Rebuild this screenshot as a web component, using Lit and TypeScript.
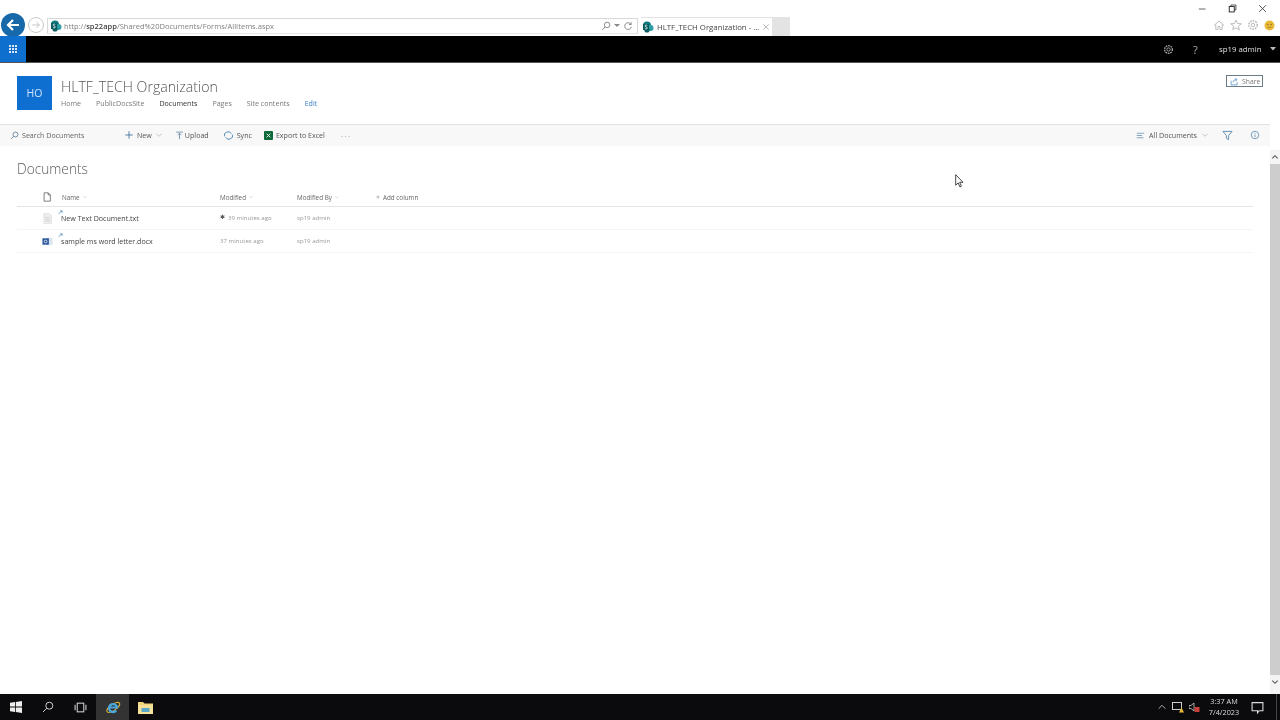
import { LitElement, html, css, svg } from "lit";
import { customElement } from "lit/decorators.js";

const spIcon = (s: number) => html`<svg width=${s} height=${s} viewBox="0 0 12 12"><circle cx="5" cy="4.500" r="4" fill="#0b7a7f"/><circle cx="8.500" cy="7" r="3" fill="#2aa0a4"/><circle cx="5" cy="9" r="2.600" fill="#0d5f63"/><rect x="1" y="3" width="6" height="6" fill="#04595c"/><path d="M5.300 4.400C4.600 3.900 3 4 3 5c0 1.200 2.400.8 2.400 2 0 1-1.700 1-2.500.5" fill="none" stroke="#fff" stroke-width=".8"/></svg>`;

const stroke = (inner: unknown, s = 12, color = "currentColor", w = 1, box = 12) => html`<svg width=${s} height=${s} viewBox="0 0 ${box} ${box}" fill="none" stroke=${color} stroke-width=${w}>${inner}</svg>`;

const search = svg`<circle cx="7.300" cy="4.700" r="3.300"/><path d="M5 7L1.500 10.700"/>`;
const chevron = svg`<path d="M2 4l4 4 4-4"/>`;
const gear = svg`<circle cx="6" cy="6" r="1.800"/><circle cx="6" cy="6" r="4.200" stroke-dasharray="1.800 .9" stroke-width="1.500"/>`;
const fileOutline = svg`<path d="M2.500 1h5l2.500 2.500V11h-7.500zM7.500 1v2.500H10"/>`;

@customElement("browser-chrome")
class BrowserChrome extends LitElement {
  static styles = css`
    :host { display: block; height: 36px; background: #fff; position: relative; }
    .bar { display: flex; align-items: flex-end; height: 36px; padding-left: 47px; }
    .addr { width: 587px; height: 14px; margin-bottom: 2px; border: 1px solid #d9d9d9; border-bottom-color: #e4e4e4; display: flex; align-items: center; font-size: 7.550px; color: #808080; padding-left: 2px; box-sizing: content-box; }
    .addr b { font-weight: 600; color: #444; }
    .addr .url { margin-left: 2px; }
    .tools { margin-left: auto; display: flex; align-items: center; gap: 3px; color: #777; padding-right: 4px; }
    .tab { margin-left: 3px; width: 131px; height: 19px; background: #fff; border-top: 1px solid #e2e2e2; box-sizing: border-box; display: flex; align-items: center; gap: 3px; padding-left: 1px; font-size: 7.800px; color: #444; white-space: nowrap; }
    .tab .x { margin-left: 0; color: #999; display: flex; }
    .newtab { width: 18px; height: 19px; background: #e3e3e3; }
    .right { position: absolute; right: 0; top: 0; width: 90px; height: 36px; }
    .win { display: flex; position: absolute; top: 4px; right: 12px; gap: 20px; align-items: center; color: #333; }
    .win span { display: flex; width: 10px; justify-content: center; }
    .ico { display: flex; position: absolute; top: 19px; right: 5px; gap: 5px; color: #bbb; align-items: center; }
    .back { position: absolute; left: 1px; top: 13px; width: 24px; height: 24px; border-radius: 50%; background: #1769aa; display: flex; align-items: center; justify-content: center; }
    .fwd { position: absolute; left: 28px; top: 17px; width: 16px; height: 16px; border-radius: 50%; border: 1px solid #c9c9c9; box-sizing: border-box; display: flex; align-items: center; justify-content: center; background: #fff; color: #bbb; }
  `;
  render() {
    return html`
      <div class="bar">
        <div class="addr">
          ${spIcon(12)}
          <span class="url">http://<b>sp22app</b>/Shared%20Documents/Forms/AllItems.aspx</span>
          <span class="tools">
            ${stroke(search, 10, "#777")}
            <svg width="6" height="4" viewBox="0 0 6 4"><path d="M0 0h6L3 3z" fill="#888"/></svg>
            ${stroke(svg`<path d="M9.500 4A4 4 0 1 0 10 7M9.800 1.500V4.200H7.200"/>`, 10, "#777")}
          </span>
        </div>
        <div class="tab">
          ${spIcon(12)}<span>HLTF_TECH Organization - ...</span>
          <span class="x">${stroke(svg`<path d="M2 2l8 8M10 2l-8 8"/>`, 8, "#999")}</span>
        </div>
        <div class="newtab"></div>
      </div>
      <div class="back"><svg width="14" height="14" viewBox="0 0 14 14" fill="none" stroke="#fff" stroke-width="2.200"><path d="M13 7H2M7 2L2 7l5 5"/></svg></div>
      <div class="fwd">${stroke(svg`<path d="M1.500 6H10M6.500 2.500L10 6l-3.500 3.500"/>`, 10, "#bbb")}</div>
      <div class="right">
        <div class="win">
          <span>${stroke(svg`<path d="M1 6h8" stroke-width="1.200"/>`, 10, "#666")}</span>
          <span>${stroke(svg`<rect x="1.500" y="3" width="6" height="6.500" stroke-width="1.200"/><path d="M3.500 3V1.200h6v6H7.500"/>`, 10, "#333")}</span>
          <span>${stroke(svg`<path d="M1.500 1.500l8 8M9.500 1.500l-8 8"/>`, 10, "#333")}</span>
        </div>
        <div class="ico">
          ${stroke(svg`<path d="M1 6.500L6 2l5 4.500M2.800 5.500V10.500H5V7.500h2v3h2.200V5.500"/>`, 12, "#bdbdbd")}
          ${stroke(svg`<path d="M6 1l1.500 3.500 3.800.300-2.900 2.500.900 3.700L6 8.700 2.700 10.500l.900-3.700L.7 4.800l3.800-.300z"/>`, 12, "#bdbdbd")}
          ${stroke(gear, 12, "#bdbdbd")}
          <svg width="11" height="11" viewBox="0 0 12 12"><circle cx="6" cy="6" r="5.500" fill="#e9b93a"/><circle cx="4.200" cy="5" r=".8" fill="#8a6a10"/><circle cx="7.800" cy="5" r=".8" fill="#8a6a10"/><path d="M3.800 8h4.400" stroke="#8a6a10" stroke-width=".7"/></svg>
        </div>
      </div>
    `;
  }
}

@customElement("suite-bar")
class SuiteBar extends LitElement {
  static styles = css`
    :host { display: flex; height: 26px; background: #000; border-bottom: 1px solid #555; box-sizing: content-box; margin-bottom: -1px; align-items: center; color: #ddd; position: relative; }
    .waffle { width: 26px; height: 26px; background: #0e6fcf; display: grid; grid-template-columns: repeat(3, 2px); grid-auto-rows: 2px; gap: 1px; align-content: center; justify-content: center; }
    .waffle i { background: #dfe9f5; }
    .gear { margin-left: auto; display: flex; }
    .help { margin-left: 19px; font-size: 11px; width: 8px; color: #aaa; }
    .user { margin-left: 18px; font-size: 7.800px; color: #e0e0e0; width: 42px; white-space: nowrap; }
    .caret { margin: 0 4px 0 9px; display: flex; }
  `;
  render() {
    return html`
      <div class="waffle">${[...Array(9)].map(() => html`<i></i>`)}</div>
      <span class="gear">${stroke(gear, 11, "#aaa")}</span>
      <span class="help">?</span>
      <span class="user">sp19 admin</span>
      <span class="caret"><svg width="6" height="4" viewBox="0 0 6 4"><path d="M0 0h6L3 3.500z" fill="#bbb"/></svg></span>
    `;
  }
}

@customElement("site-header")
class SiteHeader extends LitElement {
  static styles = css`
    :host { display: flex; height: 62px; padding: 14px 17px 0; box-sizing: border-box; position: relative; }
    .logo { width: 35px; height: 34px; background: #0f6fd1; color: #cfe3f8; font-size: 10.500px; display: flex; align-items: center; justify-content: center; }
    .txt { margin-left: 9px; }
    h1 { margin: 1px 0 0; font-weight: 300; font-size: 14.150px; line-height: 20px; color: #555; }
    nav { display: flex; gap: 15px; font-size: 7.100px; color: #7a7a7a; margin-top: 1px; line-height: 11px; }
    nav .cur { color: #333; }
    nav .edit { color: #3a7fc4; }
    .share { position: absolute; top: 13px; right: 17px; width: 37px; height: 12px; border: 1px solid #6d7d88; box-sizing: border-box; display: flex; align-items: center; gap: 3px; padding-left: 3px; font-size: 6.800px; color: #777; }
  `;
  render() {
    return html`
      <div class="logo">HO</div>
      <div class="txt">
        <h1>HLTF_TECH Organization</h1>
        <nav>
          <span>Home</span><span>PublicDocsSite</span><span class="cur">Documents</span><span>Pages</span><span>Site contents</span><span class="edit">Edit</span>
        </nav>
      </div>
      <div class="share">${stroke(svg`<path d="M1.500 5v5.500h8V7M4 7c0-2.500 2-3.500 4.500-3.500M7 1.500l2.500 2L7 5.500"/>`, 9, "#4a8ac0")}<span>Share</span></div>
    `;
  }
}

@customElement("command-bar")
class CommandBar extends LitElement {
  static styles = css`
    :host { display: flex; height: 22px; margin-right: 10px; padding-bottom: 1px; background: #f8f8f8; border-top: 1px solid #e3e3e3; box-sizing: border-box; align-items: center; font-size: 7.100px; color: #555; position: relative; }
    .search { display: flex; align-items: center; gap: 3px; width: 124px; padding-left: 10px; box-sizing: border-box; color: #666; }
    .cmd { display: flex; align-items: center; gap: 3px; margin-right: 12px; }
    .cmd.tight { gap: 1px; margin-right: 14px; }
    .more { letter-spacing: 1.500px; color: #888; font-size: 8px; margin-left: 4px; }
    .right { margin-left: auto; display: flex; align-items: center; padding-right: 10px; }
    .view { display: flex; align-items: center; gap: 4px; margin-right: 13px; }
    .gap { margin-right: 17px; display: flex; }
  `;
  render() {
    return html`
      <div class="search">${stroke(search, 9, "#4a6f8c")}<span>Search Documents</span></div>
      <div class="cmd">${stroke(svg`<path d="M6 1.500v9M1.500 6h9"/>`, 10, "#3f6f9c")}<span>New</span>${stroke(chevron, 8, "#aaa")}</div>
      <div class="cmd tight">${stroke(svg`<path d="M1.500 1.500h9M6 3v8M3.500 5.500L6 3l2.500 2.500"/>`, 9, "#5b7f9e")}<span>Upload</span></div>
      <div class="cmd">${stroke(svg`<path d="M2 7a3 3 0 0 1 2-4.500 3.500 3.500 0 0 1 5 1.500M10 5a3 3 0 0 1-2 4.500 3.500 3.500 0 0 1-5-1.500" stroke="#3f7fb0"/>`, 11, "#3f7fb0")}<span>Sync</span></div>
      <div class="cmd"><svg width="9" height="9" viewBox="0 0 10 10"><rect width="10" height="10" rx="1" fill="#0f6b3c"/><path d="M3 3l4 4M7 3L3 7" stroke="#fff"/></svg><span>Export to Excel</span></div>
      <span class="more">···</span>
      <div class="right">
        <div class="view">${stroke(svg`<path d="M1 3h10M1 6h7M1 9h9"/>`, 9, "#5b8ab0")}<span>All Documents</span>${stroke(chevron, 8, "#aaa")}</div>
        <span class="gap">${stroke(svg`<path d="M1 1.500h10L7.200 6v4.500L4.800 9V6z"/>`, 11, "#5b8ab0")}</span>
        ${stroke(svg`<circle cx="6" cy="6" r="4.500"/><path d="M6 5.500v3M6 3.500v1"/>`, 10, "#5b8ab0")}
      </div>
    `;
  }
}

@customElement("doc-list")
class DocList extends LitElement {
  static styles = css`
    :host { display: block; flex: 1; padding: 14px 17px 0 17px; min-width: 0; }
    h2 { margin: 0; font-weight: 300; font-size: 13.700px; line-height: 18px; color: #5a5a5a; }
    .row { display: grid; grid-template-columns: 44px 159px 77px 78px 1fr; align-items: center; }
    .head { margin-top: 10px; height: 19px; font-size: 6.300px; color: #666; border-bottom: 1px solid #e4e4e4; box-sizing: border-box; }
    .cell { display: flex; align-items: center; gap: 2px; white-space: nowrap; }
    .ic { padding-left: 25px; box-sizing: border-box; }
    .nm { padding-left: 1px; }
    .item { height: 23px; border-bottom: 1px solid #f5f5f5; box-sizing: border-box; font-size: 6.100px; color: #999; }
    .item .name { font-size: 7.100px; color: #444; position: relative; }
    .meta { padding-bottom: 2px; }
    .sp { position: absolute; left: -3px; top: -3px; display: flex; }
    .dot { color: #555; margin-right: 1px; font-size: 6px; }
    .add { gap: 2px; color: #666; }
  `;
  docs = [
    { name: "New Text Document.txt", mod: "39 minutes ago", dot: true, kind: "txt" },
    { name: "sample ms word letter.docx", mod: "37 minutes ago", dot: false, kind: "doc" },
  ];
  fileIcon(kind: string) {
    if (kind === "txt") {
      return html`<svg width="11" height="11" viewBox="0 0 12 12"><path d="M2 .5h6l2.500 2.500v8.500H2z" fill="#eee" stroke="#ddd" stroke-width=".7"/><path d="M3.500 5h5.500M3.500 7h5.500M3.500 9h5.500" stroke="#ccc" stroke-width=".7"/></svg>`;
    }
    return html`<svg width="11" height="11" viewBox="0 0 12 12"><rect x="5" y="2" width="6.500" height="8" fill="#dce6f2"/><rect x=".5" y="2.500" width="7" height="7" fill="#2b579a"/><circle cx="4" cy="6" r="1.500" fill="none" stroke="#fff" stroke-width=".8"/></svg>`;
  }
  render() {
    return html`
      <h2>Documents</h2>
      <div class="row head">
        <div class="cell ic">${stroke(fileOutline, 10, "#666")}</div>
        <div class="cell nm"><span>Name</span>${stroke(chevron, 6, "#ccc")}</div>
        <div class="cell"><span>Modified</span>${stroke(chevron, 6, "#ccc")}</div>
        <div class="cell"><span>Modified By</span>${stroke(chevron, 6, "#ccc")}</div>
        <div class="cell add">${stroke(svg`<path d="M6 2.500v7M2.500 6h7"/>`, 6, "#888")}<span>Add column</span></div>
      </div>
      ${this.docs.map((d) => html`
        <div class="row item">
          <div class="cell ic">${this.fileIcon(d.kind)}</div>
          <div class="cell name"><span class="sp">${stroke(svg`<path d="M1 7l6-5M3.500 1.500H7.500V5"/>`, 5, "#3f7fb0", 1.200, 9)}</span><span>${d.name}</span></div>
          <div class="cell meta">${d.dot ? html`<span class="dot">✱</span>` : ""}<span>${d.mod}</span></div>
          <div class="cell meta">sp19 admin</div>
          <div></div>
        </div>
      `)}
    `;
  }
}

@customElement("win-taskbar")
class WinTaskbar extends LitElement {
  static styles = css`
    :host { display: flex; height: 26px; background: #0b0b0d; align-items: center; color: #ddd; }
    .b { width: 32px; height: 26px; display: flex; align-items: center; justify-content: center; flex: none; }
    .ie { background: #333; width: 33px; }
    .tray { margin-left: auto; display: flex; align-items: center; padding-right: 3px; }
    .clock { font-size: 7.300px; text-align: center; line-height: 11px; color: #ddd; margin: 0 8px 0 7px; width: 34px; }
    .t { display: flex; margin-left: 5px; }
    .note { width: 16px; }
    .div { width: 1px; height: 26px; margin-left: 11px; background: #444; }
  `;
  render() {
    return html`
      <div class="b"><svg width="12" height="12" viewBox="0 0 12 12" fill="#eee"><path d="M0 1.800l5-.7v4.500H0zM5.800 1l6.200-1v5.600H5.800zM0 6.400h5v4.500l-5-.7zM5.800 6.400H12V12l-6.200-1z"/></svg></div>
      <div class="b">${stroke(svg`<circle cx="7.300" cy="4.700" r="3.500"/><path d="M4.800 7.200L1 11"/>`, 12, "#ccc")}</div>
      <div class="b">${stroke(svg`<rect x="3" y="2" width="6" height="8"/><path d="M1 3.500v5M11 3.500v5"/>`, 13, "#ccc")}</div>
      <div class="b ie"><svg width="16" height="16" viewBox="0 0 16 16"><ellipse cx="8" cy="8.500" rx="7.500" ry="3" fill="none" stroke="#d9b23a" transform="rotate(-35 8 8)"/><path d="M4 8.500h8a4 4 0 1 0-.8 3" fill="none" stroke="#4aa8e0" stroke-width="2.200"/></svg></div>
      <div class="b"><svg width="15" height="13" viewBox="0 0 15 13"><path d="M0 1h5l1.500 1.500H15V13H0z" fill="#f0d77c"/><rect x="0" y="4" width="15" height="9" fill="#f5e29a"/><rect x="3.500" y="7" width="8" height="4" fill="#5aa9c9"/></svg></div>
      <div class="tray">
        <span class="t">${stroke(svg`<path d="M2 8l4-4 4 4"/>`, 10, "#ccc")}</span>
        <span class="t"><svg width="12" height="11" viewBox="0 0 12 11"><rect x=".5" y=".5" width="9" height="7" fill="none" stroke="#ccc"/><path d="M7 10.500l2.500-5 2.500 5z" fill="#e9b93a"/></svg></span>
        <span class="t"><svg width="11" height="11" viewBox="0 0 11 11"><path d="M0 3.500h2L5 1v8L2 6.500H0z" fill="none" stroke="#ccc" stroke-width=".8"/><rect x="5.500" y="5" width="5" height="5" fill="#c9403a"/></svg></span>
        <div class="clock">3:37 AM<br />7/4/2023</div>
        <span class="b note">${stroke(svg`<path d="M1 1.500h10v7.500H7.500L6 11V9H1z"/>`, 13, "#ddd")}</span>
        <span class="div"></span>
      </div>
    `;
  }
}

@customElement("page-scrollbar")
class PageScrollbar extends LitElement {
  static styles = css`
    :host { display: flex; flex-direction: column; align-items: center; width: 10px; height: 100%; }
    .arrow { height: 14px; display: flex; align-items: center; justify-content: center; flex: none; }
    .thumb { flex: 1; background: #cdcdcd; width: 100%; }
  `;
  render() {
    return html`
      <div class="arrow">${stroke(svg`<path d="M2 8l4-4 4 4"/>`, 8, "#555", 1.600)}</div>
      <div class="thumb"></div>
      <div class="arrow">${stroke(svg`<path d="M2 4l4 4 4-4"/>`, 8, "#555", 1.600)}</div>
    `;
  }
}

@customElement("app-root")
class AppRoot extends LitElement {
  static styles = css`
    :host { display: flex; flex-direction: column; width: 1280px; height: 720px; overflow: hidden; position: relative; background: #fff; font-family: "Open Sans", "Noto Sans", sans-serif; filter: blur(.4px); }
    .main { flex: 1; display: flex; min-height: 0; }
    .gutter { width: 10px; padding: 0 0 5px; box-sizing: border-box; background: #f4f4f4; margin-top: 4px; }
    .cursor { position: absolute; left: 955px; top: 174px; }
  `;
  render() {
    return html`
      <browser-chrome></browser-chrome>
      <suite-bar></suite-bar>
      <site-header></site-header>
      <command-bar></command-bar>
      <div class="main">
        <doc-list></doc-list>
        <div class="gutter"><page-scrollbar></page-scrollbar></div>
      </div>
      <win-taskbar></win-taskbar>
      <svg class="cursor" width="9" height="14" viewBox="0 0 9 14"><path d="M.7.7v10.500l2.500-2.300 1.700 4 1.500-.7-1.700-3.900h3.300z" fill="#fff" stroke="#333" stroke-width=".9"/></svg>
    `;
  }
}
